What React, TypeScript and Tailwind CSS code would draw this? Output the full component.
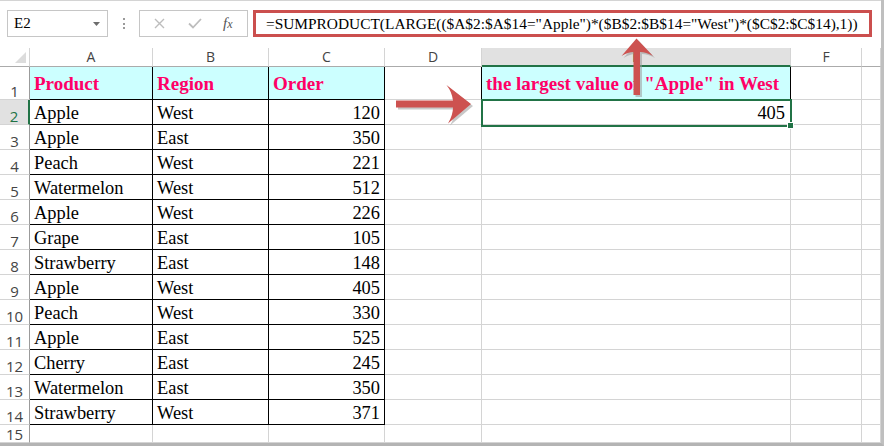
import React from "react";

const serif = { fontFamily: "'Liberation Serif', 'Times New Roman', serif" };
const sans = { fontFamily: "'Open Sans', 'Noto Sans', sans-serif" };

type Row = [string, string, string];
const data: Row[] = [
  ["Apple", "West", "120"],
  ["Apple", "East", "350"],
  ["Peach", "West", "221"],
  ["Watermelon", "West", "512"],
  ["Apple", "West", "226"],
  ["Grape", "East", "105"],
  ["Strawberry", "East", "148"],
  ["Apple", "West", "405"],
  ["Peach", "West", "330"],
  ["Apple", "East", "525"],
  ["Cherry", "East", "245"],
  ["Watermelon", "East", "350"],
  ["Strawberry", "West", "371"],
];

const gray = "border-r border-b border-r-[#d4d4d4] border-b-[#d4d4d4]";
const black = "border-r border-b border-r-black border-b-black";

function RowHead({ n, active, h }: { n: number; active?: boolean; h: string }) {
  return active ? (
    <div
      className={`${h} border-b border-b-[#d4d4d4] border-r-2 border-r-[#217346] bg-[#e1e1e1] flex items-end justify-center pb-[2px] text-[15px] leading-[12px] text-[#217346]`}
      style={sans}
    >
      {n}
    </div>
  ) : (
    <div
      className={`${h} border-b border-b-[#d4d4d4] border-r border-r-[#9b9b9b] flex items-end justify-center pb-[2px] text-[15px] leading-[12px] text-[#444]`}
      style={sans}
    >
      {n}
    </div>
  );
}

export default function App() {
  return (
    <div className="relative w-[884px] h-[446px] bg-white overflow-hidden border-r-[3px] border-b-[3px] border-r-[#bfbfbf] border-b-[#b4b4b4]">
      {/* Formula bar */}
      <div className="h-[48px] border-t border-t-[#d4d4d4] flex items-start pt-[9px]">
        <div className="ml-[7px] w-[101px] h-[27px] border border-[#c6c6c6] flex items-center justify-between pl-[6px] pr-[7px]">
          <span className="text-[15px] leading-none text-black" style={serif}>
            E2
          </span>
          <svg width="7" height="4" viewBox="0 0 7 4">
            <path d="M0 0 L7 0 L3.5 4 Z" fill="#6d6d6d" />
          </svg>
        </div>
        <div className="ml-[15px] w-[2px] h-[27px] flex flex-col items-center justify-center gap-[2.5px]">
          <div className="w-[2px] h-[2px] bg-[#9a9a9a]" />
          <div className="w-[2px] h-[2px] bg-[#9a9a9a]" />
          <div className="w-[2px] h-[2px] bg-[#9a9a9a]" />
        </div>
        <div className="ml-[14px] w-[109px] h-[27px] border border-[#c6c6c6] flex items-center pl-[14px]">
          <svg width="11" height="11" viewBox="0 0 11 11">
            <path d="M1 1 L10 10 M10 1 L1 10" stroke="#bdbdbd" strokeWidth="1.4" />
          </svg>
          <svg className="ml-[23px]" width="14" height="11" viewBox="0 0 14 11">
            <path d="M1 5.5 L5 9.5 L13 1" stroke="#bdbdbd" strokeWidth="1.8" fill="none" />
          </svg>
          <span className="ml-[21px] text-[15px] leading-none italic text-[#555]" style={serif}>
            f<span className="text-[12px]">x</span>
          </span>
        </div>
        <div className="ml-[5px] w-[619px] h-[27px] border-[3px] border-[#cb4f4e] flex items-center pl-[10px] overflow-hidden">
          <span className="text-[15.4px] leading-none text-black whitespace-nowrap" style={serif}>
            =SUMPRODUCT(LARGE(($A$2:$A$14="Apple")*($B$2:$B$14="West")*($C$2:$C$14),1))
          </span>
        </div>
      </div>

      {/* Grid */}
      <div className="relative">
        <div className="grid grid-cols-[30px_123px_116px_116px_97px_309px_71px_19px]">
          {/* header row */}
          <div className="h-[19px] border-r border-b border-r-[#d4d4d4] border-b-[#ababab] flex items-end justify-end pr-[3px] pb-[3px]">
            <svg width="11" height="11" viewBox="0 0 11 11">
              <path d="M11 0 L11 11 L0 11 Z" fill="#dcdcdc" />
            </svg>
          </div>
          {["A", "B", "C", "D"].map((c) => (
            <div
              key={c}
              className="h-[19px] border-r border-b border-r-[#d4d4d4] border-b-[#ababab] flex items-center justify-center text-[14px] leading-none text-[#444]"
              style={sans}
            >
              {c}
            </div>
          ))}
          <div
            className="h-[19px] border-r border-r-[#d4d4d4] border-b-2 border-b-[#217346] bg-[#e1e1e1] flex items-center justify-center text-[14px] leading-none text-[#217346]"
            style={sans}
          >
            E
          </div>
          {["F", ""].map((c, i) => (
            <div
              key={i}
              className="h-[19px] border-r border-b border-r-[#d4d4d4] border-b-[#ababab] flex items-center justify-center text-[14px] leading-none text-[#444]"
              style={sans}
            >
              {c}
            </div>
          ))}

          {/* row 1 */}
          <RowHead n={1} h="h-[33px]" />
          {["Product", "Region", "Order"].map((hd) => (
            <div
              key={hd}
              className={`${black} bg-[#ccffff] flex items-center pl-[4px] text-[19px] leading-none font-bold text-[#ff0066]`}
              style={serif}
            >
              {hd}
            </div>
          ))}
          <div className="border-r border-b border-r-black border-b-[#d4d4d4]" />
          <div
            className={`${black} bg-[#ccffff] flex items-center pl-[4px] text-[19px] leading-none font-bold text-[#ff0066] whitespace-nowrap`}
            style={serif}
          >
            the largest value of "Apple" in West
          </div>
          <div className={gray} />
          <div className={gray} />

          {/* rows 2-14 */}
          {data.map((r, i) => (
            <React.Fragment key={i}>
              <RowHead n={i + 2} active={i === 0} h="h-[25px]" />
              <div className={`${black} flex items-end pl-[4px] pb-[2px] text-[18.4px] leading-none text-black`} style={serif}>
                {r[0]}
              </div>
              <div className={`${black} flex items-end pl-[4px] pb-[2px] text-[18.4px] leading-none text-black`} style={serif}>
                {r[1]}
              </div>
              <div className={`${black} flex items-end justify-end pr-[4px] pb-[2px] text-[18.4px] leading-none text-black`} style={serif}>
                {r[2]}
              </div>
              <div className={gray} />
              <div className={`${gray} flex items-end justify-end pr-[5px] pb-[2px] text-[18.4px] leading-none text-black`} style={serif}>
                {i === 0 ? "405" : ""}
              </div>
              <div className={gray} />
              <div className={gray} />
            </React.Fragment>
          ))}

          {/* row 15 */}
          <RowHead n={15} h="h-[18px]" />
          <div className={gray} />
          <div className={gray} />
          <div className={gray} />
          <div className={gray} />
          <div className={gray} />
          <div className={gray} />
          <div className={gray} />
        </div>

        {/* selection E2 */}
        <div className="absolute left-[481px] top-[51px] w-[311px] h-[28px] border-2 border-[#217346] pointer-events-none" />
        <div className="absolute left-[787px] top-[74px] w-[7px] h-[7px] bg-[#217346] border border-white pointer-events-none" />
      </div>

      {/* arrows overlay */}
      <svg className="absolute left-0 top-0 pointer-events-none" width="884" height="446" viewBox="0 0 884 446">
        <g transform="translate(2,2)" fill="#9a9a9a" opacity="0.55">
          <path d="M396,100.5 L453,100.5 Q452,92 446.5,85 L471,104 L448,123.5 Q453,115 453,107.5 L396,107.5 Z" />
          <path d="M633.5,95 L633.5,52 Q628,52 621.5,56 L636.5,38.5 L653,56 Q646,52 640,52 L640,95 Z" />
        </g>
        <g fill="#cd5250">
          <path d="M396,100.5 L453,100.5 Q452,92 446.5,85 L471,104 L448,123.5 Q453,115 453,107.5 L396,107.5 Z" />
          <path d="M633.5,95 L633.5,52 Q628,52 621.5,56 L636.5,38.5 L653,56 Q646,52 640,52 L640,95 Z" />
        </g>
      </svg>
    </div>
  );
}
